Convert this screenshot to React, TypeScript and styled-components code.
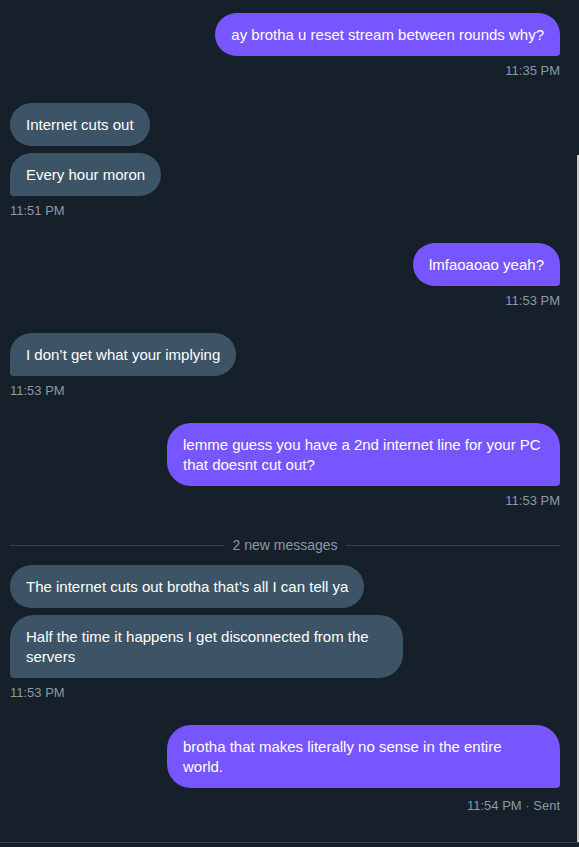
import styled, {createGlobalStyle} from "styled-components";

const GlobalStyle = createGlobalStyle`
  html, body {
    margin: 0;
    padding: 0;
    background: #15202b;
  }
  body {
    font-family: "Liberation Sans", "Noto Sans", Arial, sans-serif;
    -webkit-font-smoothing: antialiased;
  }
`

type Side = 'sent' | 'received'

interface Message {
    text: string
}

interface Group {
    side: Side
    messages: Message[]
    time: string
    status?: string
}

const Page = styled.div`
  height: 847px;
  display: flex;
  flex-direction: column;
  overflow: hidden;
`
const Viewport = styled.div`
  height: 842px;
  display: flex;
  flex-shrink: 0;
`
const Thread = styled.div`
  flex: 1;
  padding: 13px 16px 0 10px;
  display: flex;
  flex-direction: column;
  gap: 24px;
`
const ScrollTrack = styled.div`
  width: 3px;
  padding-top: 155px;
  display: flex;
`
const ScrollThumb = styled.div`
  flex: 1;
  margin-left: 1px;
  background: #c9cbcd;
`
const Composer = styled.div`
  flex: 1;
  border-top: 1px solid #38444d;
`
const GroupWrap = styled.div<{ $side: Side }>`
  display: flex;
  flex-direction: column;
  align-items: ${p => p.$side === 'sent' ? 'flex-end' : 'flex-start'};
  gap: 7px;
`
const Bubble = styled.div<{ $side: Side, $last: boolean }>`
  max-width: 361px;
  padding: 11.5px 16px;
  border-radius: 24px;
  font-size: 15px;
  line-height: 20px;
  color: #ffffff;
  background: ${p => p.$side === 'sent' ? '#7856ff' : '#3d5466'};
  ${p => p.$last && (p.$side === 'sent' ? 'border-bottom-right-radius: 4px;' : 'border-bottom-left-radius: 4px;')}
`
const Time = styled.div<{ $status: boolean }>`
  margin-top: ${p => p.$status ? '3px' : '0'};
  font-size: 13px;
  line-height: 16px;
  color: #8b98a5;
`
const Divider = styled.div`
  display: flex;
  align-items: center;
  gap: 8px;
  margin: 2px 0 -14px;
  font-size: 14px;
  line-height: 20px;
  color: #8b98a5;

  &::before, &::after {
    content: '';
    flex: 1;
    height: 1px;
    background: #38444d;
  }
`

const groups: Group[] = [
    {side: 'sent', messages: [{text: 'ay brotha u reset stream between rounds why?'}], time: '11:35 PM'},
    {side: 'received', messages: [{text: 'Internet cuts out'}, {text: 'Every hour moron'}], time: '11:51 PM'},
    {side: 'sent', messages: [{text: 'lmfaoaoao yeah?'}], time: '11:53 PM'},
    {side: 'received', messages: [{text: 'I don’t get what your implying'}], time: '11:53 PM'},
    {side: 'sent', messages: [{text: 'lemme guess you have a 2nd internet line for your PC that doesnt cut out?'}], time: '11:53 PM'},
]

const newGroups: Group[] = [
    {
        side: 'received',
        messages: [{text: 'The internet cuts out brotha that’s all I can tell ya'}, {text: 'Half the time it happens I get disconnected from the servers'}],
        time: '11:53 PM'
    },
    {side: 'sent', messages: [{text: 'brotha that makes literally no sense in the entire world.'}], time: '11:54 PM', status: 'Sent'},
]

const MessageGroup = (props: { group: Group }) => {
    const {side, messages, time, status} = props.group
    return <GroupWrap $side={side}>
        {messages.map((m, i) =>
            <Bubble key={i} $side={side} $last={i === messages.length - 1}>{m.text}</Bubble>
        )}
        <Time $status={!!status}>{status ? `${time} · ${status}` : time}</Time>
    </GroupWrap>
}

const App = () => {
    return <Page>
        <GlobalStyle/>
        <Viewport>
            <Thread>
                {groups.map((g, i) => <MessageGroup key={i} group={g}/>)}
                <Divider>2 new messages</Divider>
                {newGroups.map((g, i) => <MessageGroup key={i} group={g}/>)}
            </Thread>
            <ScrollTrack>
                <ScrollThumb/>
            </ScrollTrack>
        </Viewport>
        <Composer/>
    </Page>
}

export default App
